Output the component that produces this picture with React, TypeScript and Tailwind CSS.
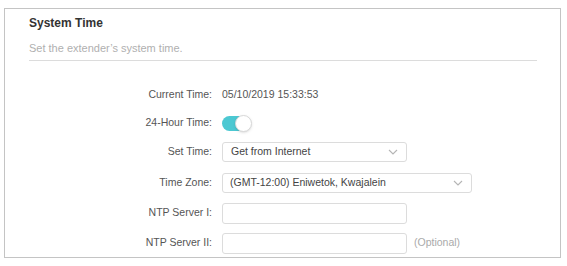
import React from "react";

const Chevron = () => (
  <svg width="10" height="6" viewBox="0 0 10 6" className="shrink-0">
    <path d="M1 1 L5 5 L9 1" fill="none" stroke="#b5b5b5" strokeWidth="1.1" />
  </svg>
);

const Row = ({
  label,
  h,
  children,
}: {
  label: string;
  h: string;
  children?: React.ReactNode;
}) => (
  <div className={`flex items-center ${h}`}>
    <div className="w-[208px] pr-[1px] text-right text-[10.5px] text-[#555]">
      {label}
    </div>
    <div className="ml-[9px] flex items-center">{children}</div>
  </div>
);

export default function App() {
  return (
    <div
      className="h-[266px] w-[567px] bg-white pl-[4px] pt-[8px]"
      style={{ fontFamily: '"Liberation Sans", Arial, sans-serif' }}
    >
      <div className="h-[250px] w-[557px] border border-[#c4c4c4] bg-white">
        <div className="pl-[24px] pr-[23px] pt-[6px]">
          <div className="h-[16px] text-[12px] font-bold leading-[16px] text-[#333]">
            System Time
          </div>
          <div className="mt-[10px] h-[14px] text-[11px] leading-[14px] text-[#b0b0b0]">
            Set the extender’s system time.
          </div>
          <div className="mt-[5px] h-px bg-[#dcdcdc]" />
        </div>
        <div className="mt-[20px] flex flex-col">
          <Row label="Current Time:" h="h-[28px]">
            <span className="text-[10.5px] text-[#555]">05/10/2019 15:33:53</span>
          </Row>
          <Row label="24-Hour Time:" h="h-[28px]">
            <div className="relative h-[15px] w-[29px] rounded-full bg-[#4cc8d2]">
              <div className="absolute right-[-1px] top-[-1px] h-[17px] w-[17px] rounded-full border border-[#d8d8d8] bg-white shadow-sm" />
            </div>
          </Row>
          <Row label="Set Time:" h="h-[30px]">
            <div className="flex h-[20px] w-[185px] items-center justify-between rounded-[3px] border border-[#dcdcdc] pl-[8px] pr-[8px] text-[10.5px] text-[#444]">
              <span>Get from Internet</span>
              <Chevron />
            </div>
          </Row>
          <Row label="Time Zone:" h="h-[31px]">
            <div className="flex h-[20px] w-[250px] items-center justify-between rounded-[3px] border border-[#dcdcdc] pl-[7px] pr-[8px] text-[10.5px] text-[#444]">
              <span>(GMT-12:00) Eniwetok, Kwajalein</span>
              <Chevron />
            </div>
          </Row>
          <Row label="NTP Server I:" h="h-[30px]">
            <div className="h-[21px] w-[185px] rounded-[3px] border border-[#dcdcdc]" />
          </Row>
          <Row label="NTP Server II:" h="h-[30px]">
            <div className="h-[21px] w-[185px] rounded-[3px] border border-[#dcdcdc]" />
            <span className="ml-[7px] text-[10.5px] text-[#aaa]">(Optional)</span>
          </Row>
        </div>
      </div>
    </div>
  );
}
